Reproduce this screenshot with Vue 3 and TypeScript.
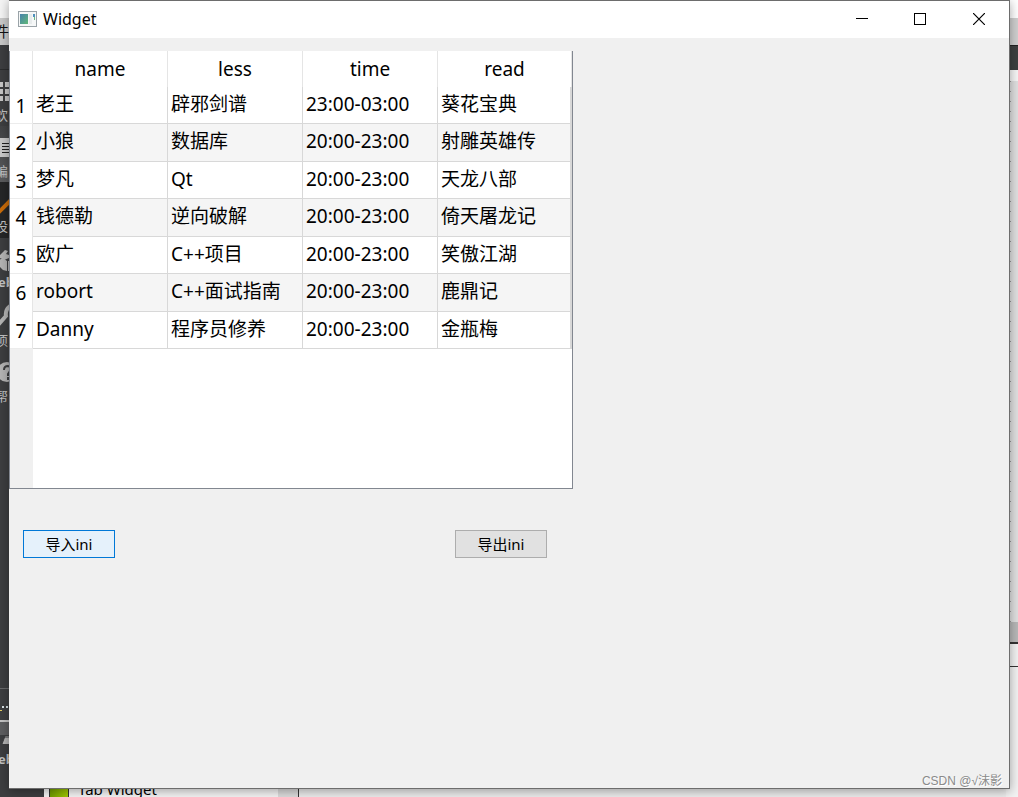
<script setup lang="ts">
import { ref } from 'vue'

interface Row {
  name: string
  less: string
  time: string
  read: string
}

const columns: (keyof Row)[] = ['name', 'less', 'time', 'read']

const rows = ref<Row[]>([
  { name: '老王', less: '辟邪剑谱', time: '23:00-03:00', read: '葵花宝典' },
  { name: '小狼', less: '数据库', time: '20:00-23:00', read: '射雕英雄传' },
  { name: '梦凡', less: 'Qt', time: '20:00-23:00', read: '天龙八部' },
  { name: '钱德勒', less: '逆向破解', time: '20:00-23:00', read: '倚天屠龙记' },
  { name: '欧广', less: 'C++项目', time: '20:00-23:00', read: '笑傲江湖' },
  { name: 'robort', less: 'C++面试指南', time: '20:00-23:00', read: '鹿鼎记' },
  { name: 'Danny', less: '程序员修养', time: '20:00-23:00', read: '金瓶梅' },
])
</script>

<template>
  <div class="desktop">
    <!-- IDE mode bar, mostly hidden behind the window -->
    <svg class="rail" width="44" height="797" viewBox="0 0 44 797">
      <defs>
        <linearGradient id="hover" x1="0" y1="0" x2="0" y2="1">
          <stop offset="0" stop-color="#424345" />
          <stop offset="1" stop-color="#5a5b5d" />
        </linearGradient>
      </defs>
      <rect width="44" height="18" fill="#f4f4f4" />
      <rect y="18" width="44" height="27" fill="#c9c9c9" />
      <text class="menu-text" x="-6" y="37">件</text>
      <rect y="69" width="44" height="1" fill="#2b2c2d" />
      <path d="M0 82h3v5H0zM5 82h5v5H5zM0 89h3v5H0zM5 89h5v5H5zM0 96h3v5H0zM5 96h5v5H5z" fill="#c6c6c6" />
      <text x="-5" y="120">欢</text>
      <rect y="126" width="44" height="56" fill="url(#hover)" />
      <rect y="138" width="12" height="19" fill="#c9c9c9" />
      <path d="M2 143.500h8M2 146.500h8M2 149.500h8M2 152.500h8" stroke="#222" />
      <text x="-5" y="176">编</text>
      <rect y="182" width="44" height="56" fill="#252627" />
      <path d="M-2 213L12 199" stroke="#c96c0a" stroke-width="4" />
      <text x="-5" y="231">设</text>
      <path d="M0 255L5 250L8 251L6 254L9 255V258L4 260L0 258zM-1 260L3 258L7 261V271L3 270L-1 266zM8 261H12V271H8z" fill="#b4b4b4" />
      <text x="-2" y="287" font-weight="700">eb</text>
      <path d="M-2 325L6 316Q5 310 10 306" fill="none" stroke="#b4b4b4" stroke-width="4" />
      <text x="-5" y="345">项</text>
      <circle cx="7" cy="372" r="10" fill="#b4b4b4" />
      <path d="M4 370Q4 366 8 366Q12 367 10 371L8 374V376M8 377V380" fill="none" stroke="#3d3e40" stroke-width="2" />
      <text x="-5" y="401">帮</text>
      <rect y="688" width="44" height="1" fill="#68696b" />
      <path d="M0 710.500H2" stroke="#e5ce62" />
      <path d="M2 707H4M6 707H8" stroke="#d8e2e6" stroke-width="2" />
      <rect y="720" width="44" height="2" fill="#c4c4c4" />
      <rect y="722" width="44" height="13" fill="#5d5e60" />
      <rect y="736" width="44" height="8" fill="#b4b4b4" />
      <path d="M0 736H5L2 744H0zM0 737H9" stroke="#3d3e40" fill="#3d3e40" />
      <text x="-2" y="764" font-weight="700">eb</text>
    </svg>

    <!-- editor column to the right of the window -->
    <div class="edge">
      <div class="edge-title"></div>
      <div class="edge-menu"></div>
      <div class="edge-bar"></div>
      <div class="edge-gap"></div>
      <div class="edge-ruler"></div>
      <div class="edge-scroll"></div>
      <div class="edge-head"></div>
      <div class="edge-rest"></div>
    </div>

    <div class="palette">
      <span class="palette-icon"></span>
      <span class="palette-label">Tab Widget</span>
      <span class="palette-scroll"></span>
    </div>

    <main class="window">
      <header class="titlebar">
        <svg class="app-icon" width="19" height="16" viewBox="0 0 19 16">
          <defs>
            <linearGradient id="pane" x1="0" y1="0" x2="1" y2="1">
              <stop offset="0" stop-color="#4582ac" />
              <stop offset="1" stop-color="#61b878" />
            </linearGradient>
          </defs>
          <rect x=".5" y=".5" width="18" height="15" fill="#f5f7f7" stroke="#9aa3a8" />
          <rect x="2" y="3" width="8" height="10" fill="url(#pane)" />
          <rect x="11" y="3" width="3" height="10" fill="#e7ebec" />
          <rect x="15" y="3" width="2" height="3" fill="#4f91bd" />
          <rect x="16" y="6" width="1" height="3" fill="#69ba83" />
        </svg>
        <h1 class="title">Widget</h1>
        <div class="controls">
          <button type="button" aria-label="Minimize">
            <svg width="12" height="12" viewBox="0 0 12 12"><path d="M0 5.500H12" stroke="#000" /></svg>
          </button>
          <button type="button" aria-label="Maximize">
            <svg width="12" height="12" viewBox="0 0 12 12"><rect x=".5" y=".5" width="11" height="11" fill="none" stroke="#000" /></svg>
          </button>
          <button type="button" aria-label="Close">
            <svg width="12" height="12" viewBox="0 0 12 12"><path d="M0 0L12 12M12 0L0 12" stroke="#000" stroke-width="1.200" /></svg>
          </button>
        </div>
      </header>

      <section class="client">
        <div class="frame">
          <table>
            <colgroup>
              <col class="col-index" />
              <col v-for="c in columns.slice(0, 3)" :key="c" class="col-data" />
              <col />
            </colgroup>
            <thead>
              <tr>
                <td class="corner"></td>
                <th v-for="c in columns" :key="c" scope="col">{{ c }}</th>
              </tr>
            </thead>
            <tbody>
              <tr v-for="(row, i) in rows" :key="i">
                <th scope="row">{{ i + 1 }}</th>
                <td v-for="c in columns" :key="c">{{ row[c] }}</td>
              </tr>
            </tbody>
          </table>
          <div class="gutter"></div>
        </div>
        <div class="actions">
          <button type="button" class="push active">导入ini</button>
          <button type="button" class="push">导出ini</button>
        </div>
      </section>
      <span class="watermark">CSDN @√沫影</span>
    </main>
  </div>
</template>

<style>
html,
body {
  margin: 0;
  overflow: hidden;
}
</style>

<style scoped>
.desktop {
  position: relative;
  box-sizing: border-box;
  display: flex;
  height: 100vh;
  padding: 0 8px 8px 9px;
  overflow: hidden;
  background: #ececec;
  color: #000;
  font-family: "Noto Sans", "Noto Sans CJK SC", sans-serif;
}

.rail {
  position: absolute;
  left: 0;
  top: 0;
  background: #3d3e40;
}

.rail text {
  fill: #c2c2c2;
  font-size: 13px;
}

.rail .menu-text {
  fill: #111;
  font-size: 15px;
}

.edge {
  position: absolute;
  right: 0;
  top: 0;
  bottom: 0;
  width: 12px;
  display: flex;
  flex-direction: column;
}

.edge-title {
  height: 18px;
  background: #fff;
}

.edge-menu {
  height: 27px;
  background: #cfcfcf;
}

.edge-bar {
  height: 24px;
  border-top: 1px solid #222;
  background: #3e4040;
}

.edge-gap {
  height: 11px;
  background: #f6f6f6;
}

.edge-ruler {
  height: 541px;
  background: repeating-linear-gradient(#999 0 1px, transparent 1px 10px) 4px 0 / 1px 100% no-repeat #e0e0e0;
}

.edge-scroll {
  height: 20px;
  background: #b8b8b8;
}

.edge-head {
  height: 22px;
  border-top: 2px solid #333;
  border-bottom: 1px solid #333;
  background: #f2f2f2;
}

.edge-rest {
  flex: 1;
  background: #f2f2f2;
}

.palette {
  position: absolute;
  left: 44px;
  bottom: 0;
  width: 254px;
  height: 17px;
  display: flex;
  border-right: 1px solid #333;
  background: #f5f5f5;
}

.palette-icon {
  width: 18px;
  margin-left: 5px;
  border: 1px solid #333;
  border-bottom: 0;
  background: linear-gradient(90deg, #6f9c00, #a0c900);
}

.palette-label {
  flex: 1;
  margin-left: 9px;
  font-size: 15px;
  line-height: 18px;
}

.palette-scroll {
  width: 20px;
  background: #dcdcdc;
}

.window {
  position: relative;
  flex: 1;
  display: flex;
  flex-direction: column;
  border: 1px solid #6d6d6d;
  border-left: 0;
  background: #f0f0f0;
  box-shadow: 0 2px 10px rgba(0, 0, 0, 0.35);
}

.titlebar {
  box-sizing: border-box;
  display: flex;
  align-items: center;
  height: 37px;
  padding: 0 0 2px 9px;
  background: #fff;
}

.title {
  margin: 0 0 0 6px;
  font-size: 16px;
  font-weight: 400;
  line-height: 20px;
}

.controls {
  display: flex;
  align-self: stretch;
  margin-left: auto;
}

.controls button {
  display: flex;
  align-items: center;
  justify-content: center;
  width: 58px;
  padding: 0;
  border: 0;
  background: transparent;
}

.controls button:last-child {
  width: 60px;
}

.client {
  flex: 1;
  padding-top: 13px;
}

.frame {
  box-sizing: border-box;
  display: flex;
  flex-direction: column;
  width: 564px;
  max-width: 100%;
  height: 438px;
  border: solid #828790;
  border-width: 0 1px 1px;
  background: #fff;
}

table {
  width: 100%;
  table-layout: fixed;
  border-collapse: separate;
  border-spacing: 0;
  font-size: 19px;
  line-height: 28px;
}

.col-index {
  width: 23px;
}

.col-data {
  width: 135px;
}

th,
td {
  box-sizing: border-box;
  padding: 0;
  font-weight: 400;
  white-space: nowrap;
}

thead tr {
  height: 36px;
}

thead th,
.corner {
  border-right: 1px solid #e5e5e5;
}

tbody tr:nth-child(odd) {
  height: 37px;
}

tbody tr:nth-child(even) {
  height: 38px;
}

tbody th {
  padding-top: 2px;
  border-right: 1px solid #e5e5e5;
}

tbody tr:nth-child(odd) th {
  border-bottom: 1px solid #ececec;
}

tbody tr:nth-child(even) th {
  padding: 0;
}

tbody td {
  padding: 0 0 2px 3px;
  border-right: 1px solid #d8d8d8;
  border-bottom: 1px solid #d8d8d8;
}

tbody td:last-child {
  border-right-width: 2px;
}

tbody tr:nth-child(even) td {
  padding-bottom: 4px;
  background: #f5f5f5;
}

.gutter {
  flex: 1;
  width: 23px;
  background: #f0f0f0;
}

.actions {
  display: flex;
  gap: 340px;
  padding: 41px 14px 0;
}

.push {
  width: 92px;
  height: 28px;
  padding: 0;
  border: 1px solid #adadad;
  background: #e1e1e1;
  color: #000;
  font-family: inherit;
  font-size: 15px;
  line-height: 24px;
}

.push.active {
  border-color: #0078d7;
  background: #e5f1fb;
}

.watermark {
  position: absolute;
  right: 7px;
  bottom: 0;
  color: #8a8a8a;
  font-family: "Liberation Sans", "Noto Sans CJK SC", sans-serif;
  font-size: 12px;
  line-height: 14px;
  text-shadow: 1px 1px 0 #fff;
}
</style>
